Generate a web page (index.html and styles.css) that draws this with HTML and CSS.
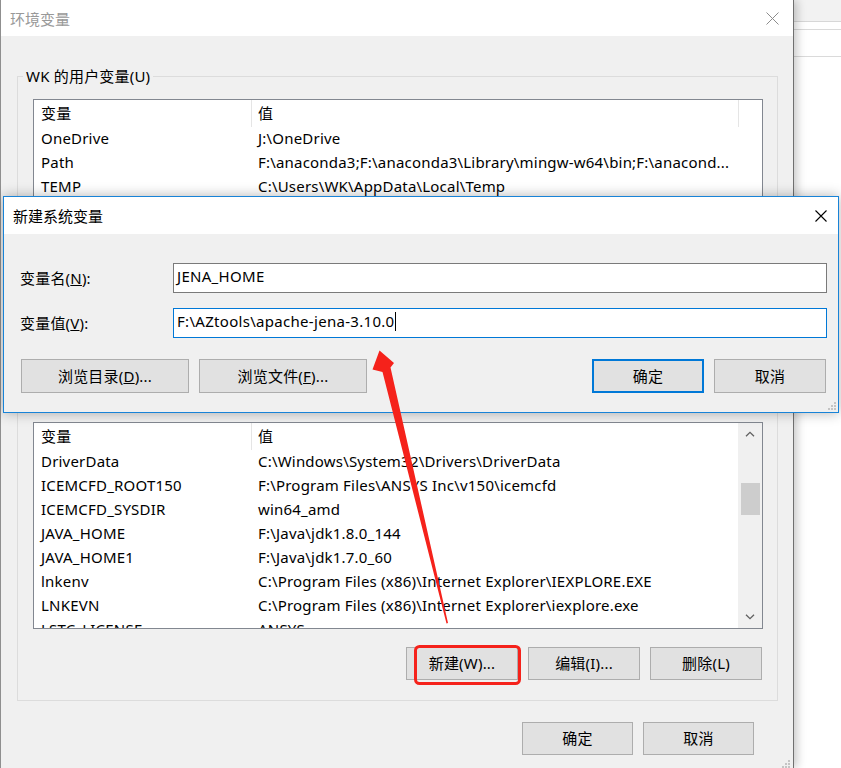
FILE: index.html
```html
<!DOCTYPE html>
<html lang="zh-CN">
<head>
    <meta charset="UTF-8">
    <meta name="viewport" content="width=device-width, initial-scale=1.0">
    <title>环境变量</title>
    <link rel="stylesheet" href="styles.css">
</head>
<body>
<div class="screen">
    <div class="env">
        <div class="titlebar inactive">
            <span class="title">环境变量</span>
            <svg class="close" width="13" height="13" viewBox="0 0 13 13"><path d="M0.5 0.5L12.5 12.5M12.5 0.5L0.5 12.5" stroke="#8c8c8c" stroke-width="1" fill="none"/></svg>
        </div>
        <div class="env-body">
            <fieldset class="group">
                <legend>WK 的用户变量(U)</legend>
                <div class="group-inner">
                    <div class="list">
                        <div class="list-main">
                            <div class="list-head"><span class="c1">变量</span><span class="c2">值</span></div>
                            <div class="row"><span class="c1">OneDrive</span><span class="c2">J:\OneDrive</span></div>
                            <div class="row"><span class="c1">Path</span><span class="c2">F:\anaconda3;F:\anaconda3\Library\mingw-w64\bin;F:\anacond...</span></div>
                            <div class="row"><span class="c1">TEMP</span><span class="c2">C:\Users\WK\AppData\Local\Temp</span></div>
                            <div class="row"><span class="c1">TMP</span><span class="c2">C:\Users\WK\AppData\Local\Temp</span></div>
                        </div>
                    </div>
                    <div class="btn-row">
                        <button class="btn">新建(N)...</button>
                        <button class="btn">编辑(E)...</button>
                        <button class="btn">删除(D)</button>
                    </div>
                </div>
            </fieldset>

            <fieldset class="group">
                <legend>系统变量(S)</legend>
                <div class="group-inner">
                    <div class="list">
                        <div class="list-main">
                            <div class="list-head"><span class="c1">变量</span><span class="c2">值</span></div>
                            <div class="row"><span class="c1">DriverData</span><span class="c2">C:\Windows\System32\Drivers\DriverData</span></div>
                            <div class="row"><span class="c1">ICEMCFD_ROOT150</span><span class="c2">F:\Program Files\ANSYS Inc\v150\icemcfd</span></div>
                            <div class="row"><span class="c1">ICEMCFD_SYSDIR</span><span class="c2">win64_amd</span></div>
                            <div class="row"><span class="c1">JAVA_HOME</span><span class="c2">F:\Java\jdk1.8.0_144</span></div>
                            <div class="row"><span class="c1">JAVA_HOME1</span><span class="c2">F:\Java\jdk1.7.0_60</span></div>
                            <div class="row"><span class="c1">lnkenv</span><span class="c2">C:\Program Files (x86)\Internet Explorer\IEXPLORE.EXE</span></div>
                            <div class="row"><span class="c1">LNKEVN</span><span class="c2">C:\Program Files (x86)\Internet Explorer\iexplore.exe</span></div>
                            <div class="row"><span class="c1">LSTC_LICENSE</span><span class="c2">ANSYS</span></div>
                        </div>
                        <div class="scrollbar">
                            <div class="arrow"><svg width="10" height="6" viewBox="0 0 10 6"><path d="M1 5.3L5 1.3L9 5.3" stroke="#606060" stroke-width="1.3" fill="none"/></svg></div>
                            <div class="track"><div class="thumb"></div></div>
                            <div class="arrow"><svg width="10" height="6" viewBox="0 0 10 6"><path d="M1 0.7L5 4.7L9 0.7" stroke="#606060" stroke-width="1.3" fill="none"/></svg></div>
                        </div>
                    </div>
                    <div class="btn-row">
                        <button class="btn">新建(W)...</button>
                        <button class="btn">编辑(I)...</button>
                        <button class="btn">删除(L)</button>
                    </div>
                </div>
            </fieldset>

            <div class="btn-row footer">
                <button class="btn">确定</button>
                <button class="btn">取消</button>
            </div>
        </div>
        <svg class="grip env-grip" width="8" height="8" viewBox="0 0 8 8"><path d="M6 0h2v2h-2zM3 3h2v2h-2zM6 3h2v2h-2zM0 6h2v2h-2zM3 6h2v2h-2zM6 6h2v2h-2z" fill="#c4c4c4"/></svg>
    </div>

    <div class="behind">
        <div class="behind-top"></div>
        <div class="behind-strip"></div>
        <div class="behind-band"></div>
    </div>

    <div class="dialog">
        <div class="titlebar">
            <span class="title">新建系统变量</span>
            <svg class="close" width="12" height="12" viewBox="0 0 12 12"><path d="M0.5 0.5L11.5 11.5M11.5 0.5L0.5 11.5" stroke="#000" stroke-width="1.1" fill="none"/></svg>
        </div>
        <div class="dialog-body">
            <div class="field-row">
                <label class="field-label">变量名(<u>N</u>):</label>
                <div class="field">JENA_HOME</div>
            </div>
            <div class="field-row">
                <label class="field-label">变量值(<u>V</u>):</label>
                <div class="field focused">F:\AZtools\apache-jena-3.10.0<span class="caret"></span></div>
            </div>
            <div class="dialog-buttons">
                <div class="btn-group">
                    <button class="btn wide">浏览目录(<u>D</u>)...</button>
                    <button class="btn wide">浏览文件(<u>F</u>)...</button>
                </div>
                <div class="btn-group">
                    <button class="btn default">确定</button>
                    <button class="btn">取消</button>
                </div>
            </div>
        </div>
        <svg class="grip dialog-grip" width="8" height="8" viewBox="0 0 8 8"><path d="M6 0h2v2h-2zM3 3h2v2h-2zM6 3h2v2h-2zM0 6h2v2h-2zM3 6h2v2h-2zM6 6h2v2h-2z" fill="#c4c4c4"/></svg>
    </div>

    <!-- red annotation drawn over the screenshot -->
    <svg class="annot" width="841" height="768" viewBox="0 0 841 768">
        <polygon points="379.5,350.5 394,363 390.5,367.5 448,623 446.5,623.5 382.5,372 372.5,369.5" fill="#f5221b"/>
        <rect x="415.5" y="646.5" width="104" height="37" rx="4" ry="4" fill="none" stroke="#f5221b" stroke-width="3"/>
    </svg>
</div>
</body>
</html>
```

FILE: styles.css
```css
* {
    box-sizing: border-box;
}
body {
    margin: 0;
    font-family: "Noto Sans", "Noto Sans CJK SC", sans-serif;
    font-size: 15px;
    letter-spacing: 0.2px;
    color: #000;
}
.screen {
    position: relative;
    display: flex;
    width: 841px;
    height: 768px;
    overflow: hidden;
    background: #fff;
}

/* back window */
.env {
    position: relative;
    z-index: 1;
    flex: none;
    width: 794px;
    height: 768px;
    background: #f0f0f0;
    border-left: 1px solid #8f8f8f;
    border-right: 1px solid #707070;
    box-shadow: 3px 0 9px rgba(0, 0, 0, 0.22);
}
.titlebar {
    display: flex;
    align-items: center;
    justify-content: space-between;
    height: 36px;
    padding: 0 14px 0 9px;
    background: #fff;
}
.titlebar .title {
    letter-spacing: 0;
}
.titlebar.inactive .title {
    color: #999;
}
.close {
    display: block;
}
.env-body {
    padding: 30px 15px 0 16px;
}
fieldset.group {
    margin: 0;
    padding: 0;
    min-width: 0;
    border: 1px solid #dcdcdc;
}
.group + .group {
    margin-top: 11px;
}
.group legend {
    margin-left: 5px;
    padding: 0 3px;
    line-height: 20px;
}
.group-inner {
    padding: 13px 14px 20px 15px;
}
.list {
    display: flex;
    height: 207px;
    overflow: hidden;
    background: #fff;
    border: 1px solid #828790;
}
.list-main {
    flex: 1;
    min-width: 0;
}
.list-head {
    display: flex;
    height: 27px;
}
.list-head span {
    padding-top: 1px;
    line-height: 25px;
    border-right: 1px solid #e5e5e5;
}
.c1 {
    flex: none;
    width: 218px;
    padding-left: 7px;
    white-space: nowrap;
}
.c2 {
    flex: none;
    width: 487px;
    padding-left: 6px;
    white-space: nowrap;
}
.row {
    display: flex;
    height: 24px;
    line-height: 23px;
}
.scrollbar {
    display: flex;
    flex-direction: column;
    flex: none;
    width: 24px;
    background: #f0f0f0;
}
.scrollbar .arrow {
    display: flex;
    align-items: center;
    justify-content: center;
    height: 22px;
}
.scrollbar .track {
    flex: 1;
    padding-top: 38px;
}
.thumb {
    width: 19px;
    height: 32px;
    margin: 0 auto;
    background: #cdcdcd;
}
.btn-row {
    display: flex;
    justify-content: flex-end;
    gap: 10px;
    margin-top: 18px;
    margin-right: 1px;
}
.btn-row .btn {
    width: 112px;
}
.btn-row.footer {
    margin-top: 21px;
    margin-right: 24px;
}
.btn-row.footer .btn {
    width: 111px;
}
.btn {
    height: 33px;
    padding: 0 0 2px;
    font-family: inherit;
    font-size: 15px;
    letter-spacing: inherit;
    color: #000;
    background: #e1e1e1;
    border: 1px solid #adadad;
    border-radius: 0;
}
.grip {
    position: absolute;
    display: block;
}
.env-grip {
    right: 3px;
    bottom: 0;
}

/* window behind, at the right edge */
.behind {
    flex: 1;
    background: #fff;
}
.behind-top {
    height: 22px;
    background: #f2f2f2;
    border-bottom: 1px solid #d7d7d7;
}
.behind-strip {
    height: 8px;
    border-bottom: 1px solid #dadada;
}
.behind-band {
    height: 27px;
    border-bottom: 1px solid #dadada;
}

/* new variable dialog */
.dialog {
    position: absolute;
    z-index: 2;
    left: 3px;
    top: 196px;
    width: 836px;
    height: 217px;
    background: #f0f0f0;
    border: 1px solid #1883d7;
    box-shadow: 0 0 12px rgba(0, 0, 0, 0.3);
}
.dialog .titlebar {
    height: 37px;
    padding: 0 11px 0 9px;
}
.dialog-body {
    padding: 29px 11px 0 16px;
}
.field-row {
    display: flex;
    align-items: center;
    height: 30px;
}
.field-row + .field-row {
    margin-top: 15px;
}
.field-label {
    flex: none;
    width: 153px;
    padding-bottom: 1px;
}
.field {
    flex: 1;
    height: 30px;
    padding-left: 3px;
    line-height: 25px;
    letter-spacing: 0.3px;
    background: #fff;
    border: 1px solid #7a7a7a;
    white-space: nowrap;
}
.field.focused {
    border-color: #0078d7;
}
.caret {
    display: inline-block;
    width: 1px;
    height: 19px;
    margin-left: 1px;
    vertical-align: -4px;
    background: #000;
}
.dialog-buttons {
    display: flex;
    justify-content: space-between;
    margin-top: 21px;
    padding: 0 1px;
}
.btn-group {
    display: flex;
    gap: 10px;
}
.dialog-buttons .btn {
    width: 112px;
    height: 34px;
}
.dialog-buttons .btn.wide {
    width: 168px;
}
.btn.default {
    border: 2px solid #0078d7;
}
.dialog-grip {
    right: 2px;
    bottom: 2px;
}

.annot {
    position: absolute;
    z-index: 3;
    left: 0;
    top: 0;
    pointer-events: none;
}
```
